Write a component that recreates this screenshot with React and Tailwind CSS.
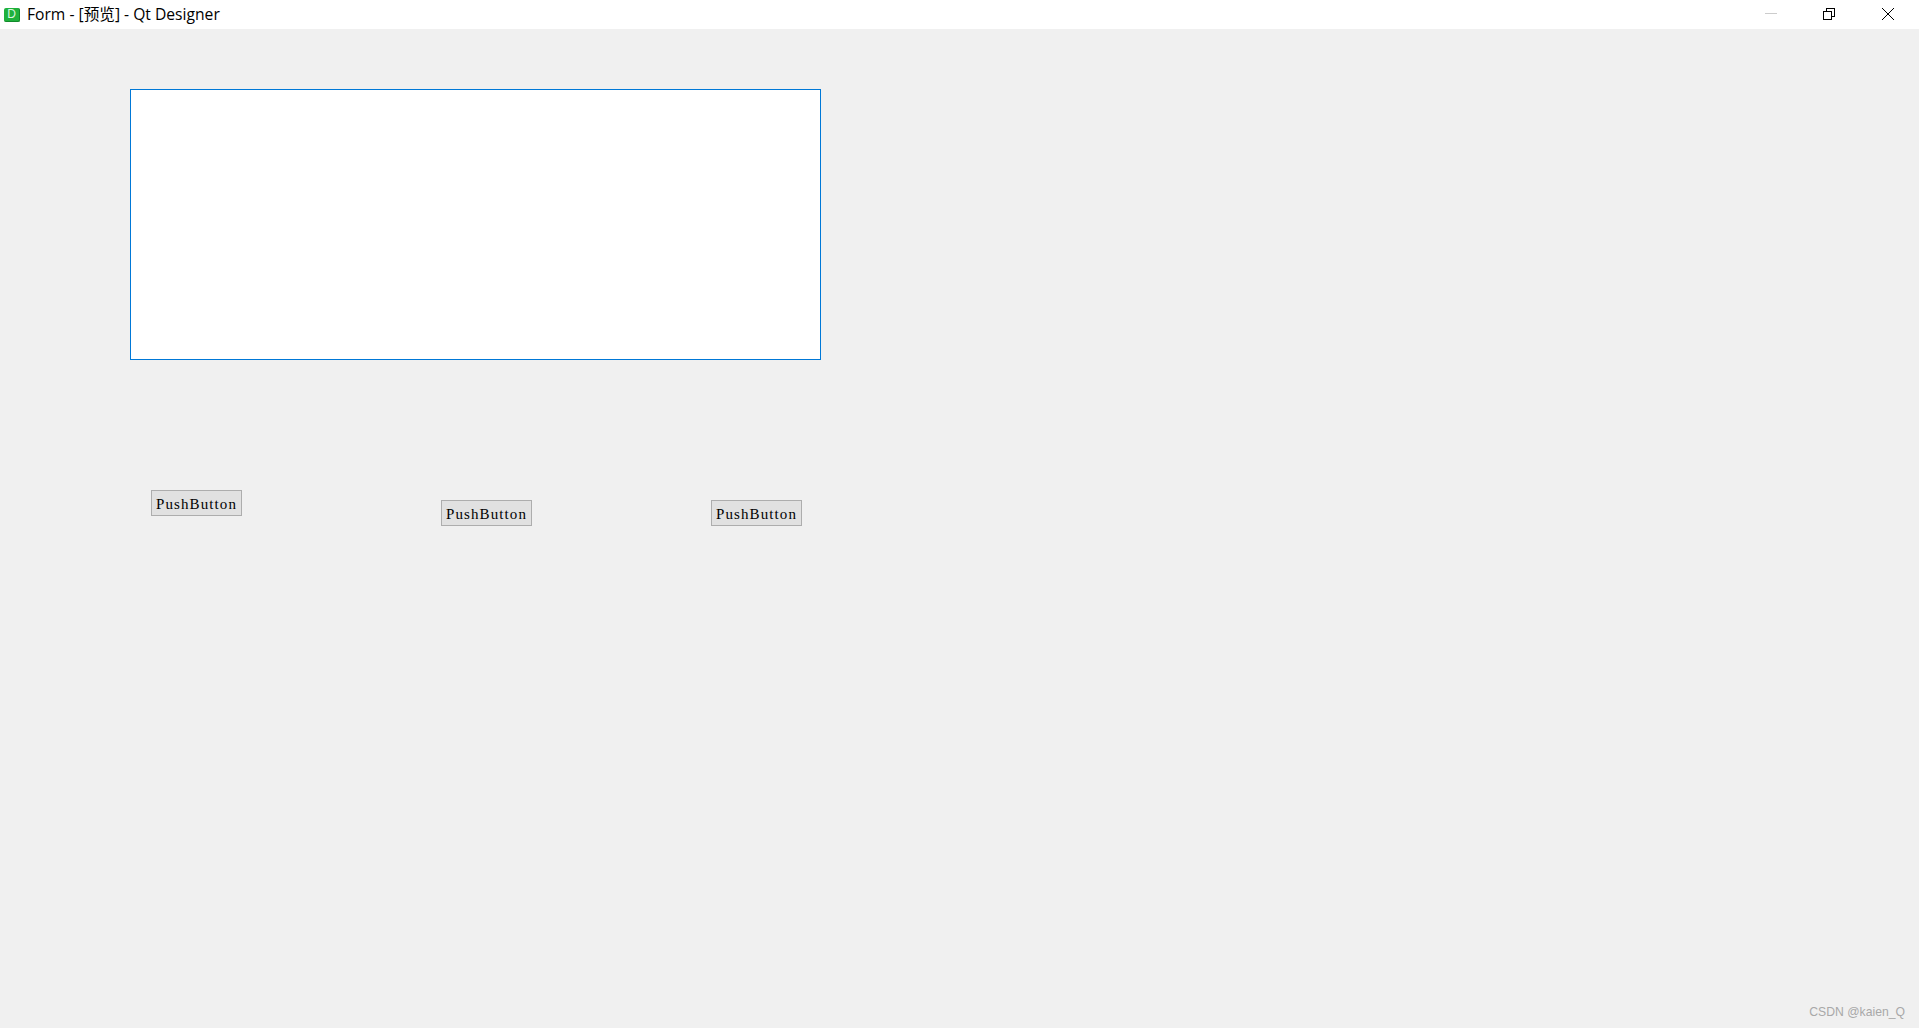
function PushButton({ className }) {
  return (
    <button
      type="button"
      className={`w-[91px] h-[26px] pt-[3px] border border-[#adadad] bg-[#e1e1e1] text-black text-[15px] tracking-[1.1px] leading-none font-['Liberation_Serif',serif] flex items-center justify-center ${className}`}
    >
      PushButton
    </button>
  );
}

function AppIcon() {
  return (
    <div className="w-[16px] h-[14px] rounded-[2px] bg-[#1eb13c] border-b border-r border-[#128a2a] flex items-center justify-center text-[#d8f5dc] text-[12px] leading-none font-['Liberation_Sans',sans-serif]">
      D
    </div>
  );
}

function TitleBar() {
  return (
    <div className="h-[29px] bg-white flex items-center justify-between">
      <div className="flex items-center pl-[4px]">
        <AppIcon />
        <span className="ml-[7px] text-[15.65px] leading-none text-black font-['Open_Sans','Noto_Sans_CJK_SC',sans-serif]">
          Form - [预览] - Qt Designer
        </span>
      </div>
      <div className="flex items-start pr-[25px] h-[12px] -mt-[1px]">
        <svg width="12" height="12" viewBox="0 0 12 12" shapeRendering="crispEdges">
          <path d="M0 5.5H12" stroke="#cccccc" fill="none" />
        </svg>
        <svg className="ml-[46px]" width="12" height="12" viewBox="0 0 12 12" shapeRendering="crispEdges">
          <path d="M0.5 3.5H8.5V11.5H0.5Z M3.5 3.5V0.5H11.5V8.5H8.5" stroke="#000" fill="none" />
        </svg>
        <svg className="ml-[47px]" width="12" height="12" viewBox="0 0 12 12">
          <path d="M0 0L12 12M12 0L0 12" stroke="#000" fill="none" />
        </svg>
      </div>
    </div>
  );
}

export default function App() {
  return (
    <div className="w-[1919px] h-[1028px] bg-[#f0f0f0] flex flex-col overflow-hidden">
      <TitleBar />
      <div className="flex-1 relative pl-[130px] pt-[60px]">
        <div className="w-[691px] h-[271px] bg-white border border-[#0078d7]" />
        <div className="flex items-start mt-[130px]">
          <PushButton className="ml-[21px]" />
          <PushButton className="ml-[199px] mt-[10px]" />
          <PushButton className="ml-[179px] mt-[10px]" />
        </div>
        <span className="absolute right-[14px] bottom-[9px] text-[12.2px] leading-[14px] text-[#a8a8a8] font-['Liberation_Sans',sans-serif]">
          CSDN @kaien_Q
        </span>
      </div>
    </div>
  );
}
